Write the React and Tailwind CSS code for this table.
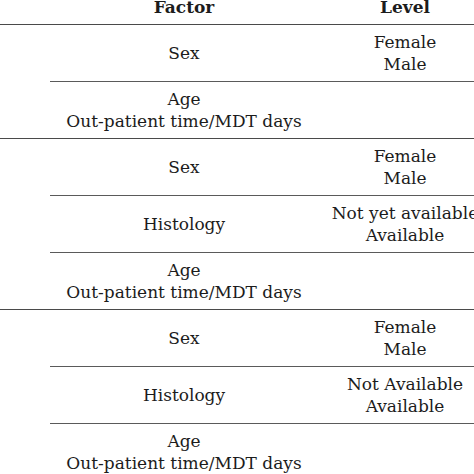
// Factor / Level table (cropped view)

const groups = [
  [
    { factor: ["Sex"], level: ["Female", "Male"] },
    { factor: ["Age", "Out-patient time/MDT days"], level: [] },
  ],
  [
    { factor: ["Sex"], level: ["Female", "Male"] },
    { factor: ["Histology"], level: ["Not yet available", "Available"] },
    { factor: ["Age", "Out-patient time/MDT days"], level: [] },
  ],
  [
    { factor: ["Sex"], level: ["Female", "Male"] },
    { factor: ["Histology"], level: ["Not Available", "Available"] },
    { factor: ["Age", "Out-patient time/MDT days"], level: [] },
  ],
];

const Lines = ({ items }) => (
  <div className="flex flex-col items-center">
    {items.map((t, i) => (
      <span key={i} className="whitespace-nowrap">
        {t}
      </span>
    ))}
  </div>
);

const Row = ({ row }) => (
  <div className="flex h-[56px]">
    <div className="w-[50px] shrink-0" />
    <div className="w-[268px] shrink-0 flex items-center justify-center">
      <Lines items={row.factor} />
    </div>
    <div className="w-[174px] shrink-0 flex items-center justify-center">
      <Lines items={row.level} />
    </div>
  </div>
);

const App = () => {
  return (
    <div
      className="w-[474px] h-[474px] overflow-hidden bg-white text-[#1c1c1c] text-[17px] leading-[22.5px]"
      style={{ fontFamily: '"DejaVu Serif", "Liberation Serif", serif' }}
    >
      <div className="w-[492px]">
        {/* header, top is cut off */}
        <div className="flex h-[24px] font-bold leading-[17px]">
          <div className="w-[50px] shrink-0" />
          <div className="w-[268px] shrink-0 text-center -mt-[1px]">Factor</div>
          <div className="w-[174px] shrink-0 text-center -mt-[1px]">Level</div>
        </div>

        {groups.map((rows, g) => (
          <div key={g}>
            <div className="h-px bg-[#4a4a4a]" />
            {rows.map((row, i) => (
              <div key={i}>
                {i > 0 && <div className="ml-[50px] h-px bg-[#5a5a5a]" />}
                <Row row={row} />
              </div>
            ))}
          </div>
        ))}
      </div>
    </div>
  );
};

export default App;
